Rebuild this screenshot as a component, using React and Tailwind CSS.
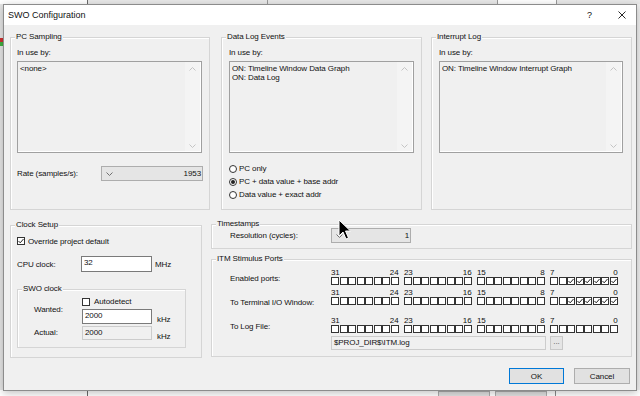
import React from "react";

function Chevron({ up, className = "" }) {
  return (
    <svg width="7" height="4" viewBox="0 0 7 4" className={className}>
      <polyline
        points={up ? "0.5,3.5 3.5,0.5 6.5,3.5" : "0.5,0.5 3.5,3.5 6.5,0.5"}
        fill="none"
        stroke="currentColor"
        strokeWidth="1"
      />
    </svg>
  );
}

function Group({ title, className = "", children }) {
  return (
    <div className={`relative border border-[#d5d5d5] shadow-[inset_1px_1px_0_#ffffff] ${className}`}>
      <span className="absolute left-[4px] top-[-6px] bg-[#f0f0f0] px-px leading-[9px]">{title}</span>
      {children}
    </div>
  );
}

function ListBox({ lines, className = "" }) {
  return (
    <div className={`flex h-[92px] border border-[#a0a0a0] bg-[#f0f0f0] shadow-[inset_-1px_-1px_0_#ffffff] ${className}`}>
      <div className="flex-1 pl-[2px] pt-[2px] leading-[9px]">
        {lines.map((l) => (
          <div key={l}>{l}</div>
        ))}
      </div>
      <div className="mb-px mr-px flex w-[15px] flex-col items-center justify-between bg-[#f4f4f4] pb-[3px] pt-[5px] text-[#c4c4c4]">
        <Chevron up />
        <Chevron />
      </div>
    </div>
  );
}

function Combo({ value, className = "" }) {
  return (
    <div className={`flex h-[15px] items-center justify-between border border-[#adadad] bg-[#e5e5e5] pl-[4px] pr-[1px] ${className}`}>
      <Chevron className="text-[#707070]" />
      <span>{value}</span>
    </div>
  );
}

function Check({ checked }) {
  return (
    <span className="flex h-[8px] w-[8px] shrink-0 items-center justify-center border border-[#333333] bg-white">
      {checked && (
        <svg width="6" height="6" viewBox="0 0 6 6">
          <polyline points="0.5,3 2.2,4.8 5.5,1" fill="none" stroke="#222222" strokeWidth="1" />
        </svg>
      )}
    </span>
  );
}

function Radio({ checked, label }) {
  return (
    <div className="flex h-[13px] items-center gap-[2px]">
      <span className="flex h-[8px] w-[8px] items-center justify-center rounded-full border border-[#333333] bg-white">
        {checked && <span className="h-[4px] w-[4px] rounded-full bg-[#222222]" />}
      </span>
      <span>{label}</span>
    </div>
  );
}

function Edit({ value, className = "", disabled }) {
  return (
    <div
      className={`flex items-start border pl-[2px] pt-[1px] leading-[9px] ${
        disabled ? "border-[#cccccc] bg-[#f0f0f0]" : "border-[#7a7a7a] bg-white"
      } ${className}`}
    >
      {value}
    </div>
  );
}

function PortGroup({ hi, lo, checked = 0 }) {
  return (
    <div className="flex w-[67.5px] flex-col">
      <div className="flex h-[9px] justify-between leading-[9px]">
        <span>{hi}</span>
        <span>{lo}</span>
      </div>
      <div className="flex gap-[0.5px]">
        {Array.from({ length: 8 }, (_, i) => (
          <Check key={i} checked={i >= 8 - checked} />
        ))}
      </div>
    </div>
  );
}

function Ports({ checked = 0 }) {
  return (
    <div className="flex gap-[5.5px]">
      <PortGroup hi="31" lo="24" />
      <PortGroup hi="23" lo="16" />
      <PortGroup hi="15" lo="8" />
      <PortGroup hi="7" lo="0" checked={checked} />
    </div>
  );
}

export default function App() {
  return (
    <div className="relative h-[396px] w-[640px] overflow-hidden bg-[#f0f0f0] font-['Liberation_Sans',Arial,sans-serif] text-[8px] leading-[9px] tracking-[-0.1px] text-[#111111]">
      {/* window behind the dialog */}
      <div className="flex h-full flex-col">
        <div className="flex h-[4px] bg-[#e9e9e9]">
          <div className="w-[88px] border-r border-[#6a6a6a] bg-white" />
          <div className="w-[180px] border-r border-[#9a9a9a]" />
          <div className="ml-auto w-[60px] border-x border-[#9a9a9a] bg-white" />
          <div className="w-[83px]" />
        </div>
        <div className="flex flex-1">
          <div className="flex w-[3px] flex-col bg-[#e6e6e6]">
            <div className="mt-[34px] h-[4px] bg-[#d03030]" />
            <div className="h-[4px] bg-[#40b040]" />
          </div>
        </div>
        <div className="flex h-[6px] bg-white">
          <div className="w-[88px] border-r border-[#6a6a6a]" />
          <div className="ml-[350px] mt-px w-[52px] border border-b-0 border-[#adadad] bg-[#e1e1e1]" />
          <div className="ml-[5px] mt-px w-[52px] border border-b-0 border-[#adadad] bg-[#e1e1e1]" />
          <div className="ml-[8px] w-px bg-[#8a8a8a]" />
        </div>
      </div>

      {/* dialog */}
      <div className="absolute left-[3px] top-[4px] flex h-[387px] w-[634px] flex-col border border-[#8c8c8c] bg-[#f0f0f0] shadow-[0_2px_8px_rgba(0,0,0,0.25)]">
        <div className="flex h-[20px] shrink-0 items-center bg-white pl-[4px] text-[9px] tracking-normal">
          <span>SWO Configuration</span>
          <span className="ml-auto">?</span>
          <svg width="8" height="8" viewBox="0 0 8 8" className="ml-[26px] mr-[10px]">
            <path d="M0.5 0.5 L7.5 7.5 M7.5 0.5 L0.5 7.5" stroke="#111111" strokeWidth="0.9" />
          </svg>
        </div>

        <div className="flex flex-1 flex-col">
          {/* top row */}
          <div className="mt-[12px] flex pl-[6px]">
            <Group title="PC Sampling" className="h-[173px] w-[200px] px-[6px] pt-[10px]">
              <div>In use by:</div>
              <ListBox className="mt-[4px] w-[185px]" lines={["<none>"]} />
              <div className="mt-[13px] flex items-center">
                <span className="w-[84px]">Rate (samples/s):</span>
                <Combo className="w-[102px]" value="1953" />
              </div>
            </Group>

            <Group title="Data Log Events" className="ml-[11px] h-[173px] w-[201px] px-[7px] pt-[10px]">
              <div>In use by:</div>
              <ListBox className="mt-[4px] w-[185px]" lines={["ON: Timeline Window Data Graph", "ON: Data Log"]} />
              <div className="mt-[9px] flex flex-col">
                <Radio label="PC only" />
                <Radio checked label="PC + data value + base addr" />
                <Radio label="Data value + exact addr" />
              </div>
            </Group>

            <Group title="Interrupt Log" className="ml-[9px] h-[173px] w-[201px] px-[7px] pt-[10px]">
              <div>In use by:</div>
              <ListBox className="mt-[4px] w-[184px]" lines={["ON: Timeline Window Interrupt Graph"]} />
            </Group>
          </div>

          {/* bottom row */}
          <div className="mt-[14px] flex items-start pl-[6px]">
            <Group title="Clock Setup" className="mt-px h-[133px] w-[192px] px-[6px] pt-[10px]">
              <div className="flex h-[10px] items-center gap-[3px]">
                <Check checked />
                <span>Override project default</span>
              </div>
              <div className="mt-[10px] flex items-center">
                <span className="w-[64px]">CPU clock:</span>
                <Edit className="h-[16px] w-[71px]" value="32" />
                <span className="ml-[3px]">MHz</span>
              </div>
              <Group title="SWO clock" className="mt-[17px] h-[59px] w-[169px] pt-[7px]">
                <div className="flex items-center gap-[4px] pl-[64px]">
                  <Check />
                  <span>Autodetect</span>
                </div>
                <div className="mt-[3px] flex items-start pl-[16px]">
                  <span className="-mt-[4px] w-[48px]">Wanted:</span>
                  <Edit className="h-[15px] w-[70px]" value="2000" />
                  <span className="ml-[5px] mt-[6px]">kHz</span>
                </div>
                <div className="mt-[2px] flex items-start pl-[16px]">
                  <span className="mt-[2px] w-[48px]">Actual:</span>
                  <Edit disabled className="h-[14px] w-[70px]" value="2000" />
                  <span className="ml-[5px] mt-[6px]">kHz</span>
                </div>
              </Group>
            </Group>

            <div className="ml-[9px] flex w-[421px] flex-col">
              <Group title="Timestamps" className="h-[25px] pl-[18px] pt-[3px]">
                <div className="flex items-center">
                  <span className="w-[101px]">Resolution (cycles):</span>
                  <Combo className="w-[80px]" value="1" />
                </div>
              </Group>

              <Group title="ITM Stimulus Ports" className="mt-[10px] h-[98px] pl-[18px] pt-[8px]">
                <div className="flex items-start">
                  <span className="mt-[6px] w-[101px]">Enabled ports:</span>
                  <Ports checked={6} />
                </div>
                <div className="mt-[3px] flex items-start">
                  <span className="mt-[10px] w-[101px]">To Terminal I/O Window:</span>
                  <Ports checked={6} />
                </div>
                <div className="mt-[9px] flex items-start">
                  <span className="mt-[6px] w-[101px]">To Log File:</span>
                  <Ports />
                </div>
                <div className="mt-[3px] flex items-center pl-[101px]">
                  <Edit disabled className="h-[14px] w-[215px] border-[#adadad]" value="$PROJ_DIR$\ITM.log" />
                  <div className="ml-[4px] flex h-[14px] w-[13px] items-center justify-center border border-[#c8c8c8] bg-[#e5e5e5] pb-[3px] text-[#555555]">
                    ...
                  </div>
                </div>
              </Group>
            </div>
          </div>

          {/* buttons */}
          <div className="mt-[10px] flex justify-end gap-[10px] pr-[6px]">
            <div className="flex h-[16px] w-[55px] items-center justify-center border border-[#0078d7] bg-[#e1e1e1]">OK</div>
            <div className="flex h-[16px] w-[56px] items-center justify-center border border-[#adadad] bg-[#e1e1e1]">Cancel</div>
          </div>
        </div>
      </div>

      {/* mouse pointer */}
      <svg width="14" height="22" viewBox="0 0 14 22" className="absolute left-[338px] top-[219px]">
        <path d="M1 1 L1 17 L5 13 L8 20 L10.5 19 L7.5 12 L12.5 12 Z" fill="#000000" stroke="#ffffff" strokeWidth="1" />
      </svg>
    </div>
  );
}
